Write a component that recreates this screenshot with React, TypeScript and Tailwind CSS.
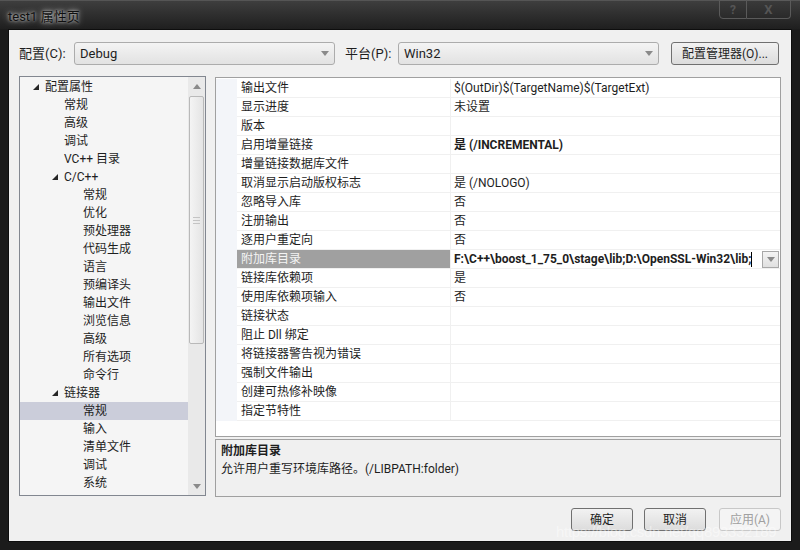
import React from "react";

const font = "font-['Roboto','Noto_Sans_CJK_SC',sans-serif]";

const tree: [string, number, boolean?][] = [
  ["配置属性", 0, true],
  ["常规", 1],
  ["高级", 1],
  ["调试", 1],
  ["VC++ 目录", 1],
  ["C/C++", 1, true],
  ["常规", 2],
  ["优化", 2],
  ["预处理器", 2],
  ["代码生成", 2],
  ["语言", 2],
  ["预编译头", 2],
  ["输出文件", 2],
  ["浏览信息", 2],
  ["高级", 2],
  ["所有选项", 2],
  ["命令行", 2],
  ["链接器", 1, true],
  ["常规", 2],
  ["输入", 2],
  ["清单文件", 2],
  ["调试", 2],
  ["系统", 2],
];

const props: [string, string, boolean?][] = [
  ["输出文件", "$(OutDir)$(TargetName)$(TargetExt)"],
  ["显示进度", "未设置"],
  ["版本", ""],
  ["启用增量链接", "是 (/INCREMENTAL)", true],
  ["增量链接数据库文件", ""],
  ["取消显示启动版权标志", "是 (/NOLOGO)"],
  ["忽略导入库", "否"],
  ["注册输出", "否"],
  ["逐用户重定向", "否"],
  ["附加库目录", "F:\\C++\\boost_1_75_0\\stage\\lib;D:\\OpenSSL-Win32\\lib;", true],
  ["链接库依赖项", "是"],
  ["使用库依赖项输入", "否"],
  ["链接状态", ""],
  ["阻止 Dll 绑定", ""],
  ["将链接器警告视为错误", ""],
  ["强制文件输出", ""],
  ["创建可热修补映像", ""],
  ["指定节特性", ""],
];

const padByLevel = ["pl-[13px]", "pl-[32px]", "pl-[51px]"];

function Arrow({ up = false }: { up?: boolean }) {
  return (
    <svg width="8" height="5" viewBox="0 0 8 5">
      <polygon points={up ? "0,5 8,5 4,0" : "0,0 8,0 4,5"} fill="#8a8a8a" />
    </svg>
  );
}

function Combo({ value }: { value: string }) {
  return (
    <div className="w-[261px] h-[23px] flex items-center justify-between px-[5px] rounded-[3px] border border-[#acacac] bg-gradient-to-b from-[#f4f4f4] to-[#e2e2e2] text-[13px] text-[#1e1e1e]">
      <span>{value}</span>
      <Arrow />
    </div>
  );
}

function Btn({ label, disabled = false, w = "w-[62px]" }: { label: string; disabled?: boolean; w?: string }) {
  return (
    <div
      className={`${w} h-[23px] flex items-center justify-center rounded-[3px] border text-[12px] ${
        disabled
          ? "border-[#c8c8c8] bg-[#f4f4f4] text-[#a0a0a0]"
          : "border-[#707070] bg-gradient-to-b from-[#f2f2f2] to-[#dcdcdc] text-[#1e1e1e]"
      }`}
    >
      {label}
    </div>
  );
}

export default function App() {
  return (
    <div className={`relative w-[800px] h-[550px] bg-[#1b1b1b] flex flex-col ${font}`}>
      {/* title bar */}
      <div className="h-[29px] flex items-start justify-between bg-gradient-to-b from-[#3e3e3e] to-[#1f1f1f] border-t border-[#555]">
        <span className="ml-[8px] mt-[6px] text-[13px] text-[#101010] [text-shadow:0_0_6px_rgba(255,255,255,0.8),0_0_3px_rgba(255,255,255,0.6)]">
          test1 属性页
        </span>
        <div className="flex mr-[9px] -mt-px">
          <div className="w-[28px] h-[19px] flex items-center justify-center border border-[#5a5a5a] rounded-bl-[4px] bg-gradient-to-b from-[#3a3a3a] to-[#2a2a2a] text-[12px] font-bold text-[#555]">
            ?
          </div>
          <div className="w-[44px] h-[19px] flex items-center justify-center border border-l-0 border-[#5a5a5a] rounded-br-[4px] bg-gradient-to-b from-[#3a3a3a] to-[#2a2a2a] text-[13px] font-bold text-[#555]">
            X
          </div>
        </div>
      </div>

      {/* client area */}
      <div className="mx-[8px] mb-[8px] flex-1 flex flex-col bg-[#f0f0f0] border border-[#0e0e0e] px-[10px] pt-[12px] text-[12px] text-[#1e1e1e]">
        <div className="flex items-center h-[23px]">
          <span className="w-[55px] text-[13px]">配置(C):</span>
          <Combo value="Debug" />
          <span className="w-[53px] ml-[10px] text-[13px]">平台(P):</span>
          <Combo value="Win32" />
          <div className="ml-[12px]">
            <Btn label="配置管理器(O)..." w="w-[108px]" />
          </div>
        </div>

        <div className="flex mt-[11px] gap-[9px]">
          {/* tree */}
          <div className="w-[187px] h-[420px] border border-[#828790] bg-[#f5f5f5] flex">
            <div className="flex-1 pt-px">
              {tree.map(([t, lvl, exp], i) => (
                <div
                  key={i}
                  className={`h-[18px] flex items-center ${padByLevel[lvl]} ${
                    i === 18 ? "bg-[#cbcdda]" : ""
                  }`}
                >
                  <span className="w-[12px] flex items-center">
                    {exp && (
                      <svg width="6" height="6" viewBox="0 0 6 6">
                        <polygon points="6,0 6,6 0,6" fill="#262626" />
                      </svg>
                    )}
                  </span>
                  <span>{t}</span>
                </div>
              ))}
            </div>
            <div className="w-[17px] bg-[#e9e9e9] flex flex-col items-center">
              <div className="h-[18px] flex items-center justify-center">
                <Arrow up />
              </div>
              <div className="w-[15px] h-[248px] mt-px rounded-[2px] border border-[#b9b9b9] bg-gradient-to-r from-[#f4f4f4] to-[#e4e4e4] flex flex-col items-center justify-center gap-[2px]">
                <div className="w-[7px] h-px bg-[#c4c4c4]" />
                <div className="w-[7px] h-px bg-[#c4c4c4]" />
                <div className="w-[7px] h-px bg-[#c4c4c4]" />
              </div>
              <div className="flex-1" />
              <div className="h-[18px] flex items-center justify-center">
                <Arrow />
              </div>
            </div>
          </div>

          {/* property grid + description */}
          <div className="w-[566px] flex flex-col gap-[2px] pt-px">
            <div className="h-[360px] border border-[#a0a0a0] bg-white pt-px">
              {props.map(([n, v, b], i) => {
                const sel = i === 9;
                return (
                  <div key={i} className="h-[19px] flex">
                    <div className="w-[21px] bg-[#f3f5f9]" />
                    <div
                      className={`w-[214px] flex items-center pl-[4px] border-b border-r border-[#f0f0f0] ${
                        sel ? "bg-[#a0a0a0] text-[#f4f4f4]" : ""
                      }`}
                    >
                      {n}
                    </div>
                    <div className="flex-1 flex items-center pl-[3px] border-b border-[#f0f0f0] overflow-hidden whitespace-nowrap">
                      <span className={b ? "font-bold" : ""}>{v}</span>
                      {sel && (
                        <>
                          <span className="w-px h-[15px] bg-black" />
                          <div className="flex-1" />
                          <div className="w-[17px] h-[17px] mr-px border border-[#a8a8a8] bg-gradient-to-b from-[#f4f4f4] to-[#e0e0e0] flex items-center justify-center">
                            <Arrow />
                          </div>
                        </>
                      )}
                    </div>
                  </div>
                );
              })}
            </div>
            <div className="h-[58px] border border-[#a0a0a0] bg-[#f0f0f0] px-[5px] pt-[2px]">
              <div className="font-bold h-[18px] flex items-center">附加库目录</div>
              <div className="h-[18px] flex items-center">允许用户重写环境库路径。(/LIBPATH:folder)</div>
            </div>
          </div>
        </div>

        <div className="flex justify-end mt-[11px] gap-[11px]">
          <Btn label="确定" />
          <Btn label="取消" />
          <div className="ml-[2px]">
            <Btn label="应用(A)" disabled />
          </div>
        </div>
      </div>

      <div className="absolute left-[556px] top-[521px] text-[15px] text-white/45 font-['Liberation_Sans',sans-serif] tracking-[-0.3px] pointer-events-none whitespace-nowrap">
        https://blog.csdn.net/qq893332189
      </div>
    </div>
  );
}
